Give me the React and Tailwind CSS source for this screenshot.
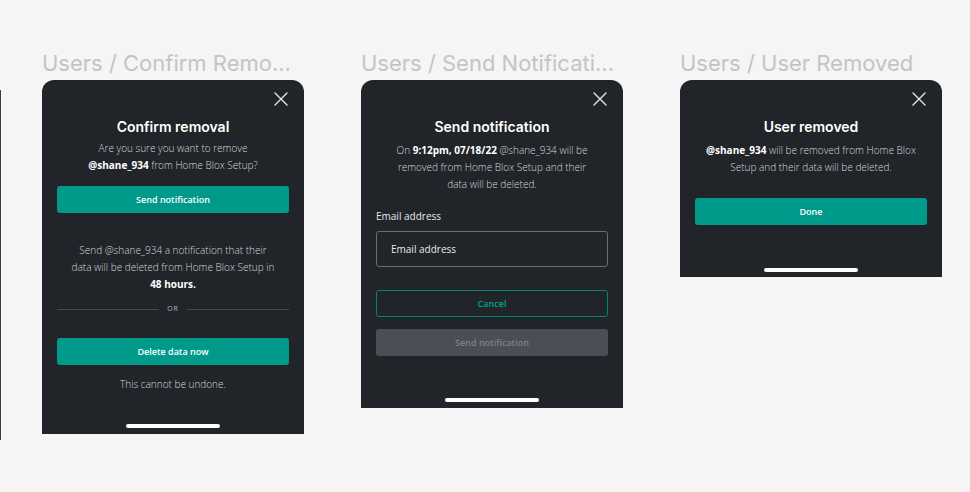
import React from "react";

const teal = "bg-[#009a8b]";

function CloseIcon() {
  return (
    <svg width="14" height="14" viewBox="0 0 14 14" fill="none">
      <path d="M1 1L13 13M13 1L1 13" stroke="#e5e7eb" strokeWidth="1.4" strokeLinecap="round" />
    </svg>
  );
}

function HomeBar() {
  return <div className="mx-auto h-[4px] w-[94px] rounded-full bg-white" />;
}

// frame titles are cut short in the design file itself
function Frame({ label, children }) {
  return (
    <div className="flex w-[262px] flex-col pt-[50px]">
      <div className="mb-[4px] h-[26px] whitespace-nowrap text-[22px] leading-[26px] text-[#c4c4c4]">{label}</div>
      <div className="flex flex-col rounded-t-[12px] bg-[#212429] px-[15px]">
        <div className="flex h-[14px] justify-end pr-[1px] mt-[12px]">
          <CloseIcon />
        </div>
        {children}
      </div>
    </div>
  );
}

function Title({ children }) {
  return (
    <div className="mt-[11px] text-center text-[14px] font-semibold leading-[20px] text-white" style={{ fontFamily: "Inter, sans-serif" }}>
      {children}
    </div>
  );
}

function Body({ className = "", children }) {
  return (
    <p className={"whitespace-nowrap text-center text-[10px] font-light leading-[17px] text-[#d4d6d9] " + className}>{children}</p>
  );
}

function Button({ className = "", children }) {
  return (
    <div className={"flex h-[27px] items-center justify-center rounded-[3px] text-[9px] font-semibold " + className}>{children}</div>
  );
}

export default function App() {
  return (
    <div className="flex h-[492px] w-[970px] items-start overflow-hidden bg-[#f5f5f5]" style={{ fontFamily: "'Open Sans', sans-serif" }}>
      <div className="mt-[90px] h-[350px] w-px bg-[#3a3d43]" />
      <div className="ml-[41px] flex items-start gap-[57px]" style={{ fontFamily: "Inter, sans-serif" }}>
        <Frame label="Users / Confirm Remo...">
          <div style={{ fontFamily: "'Open Sans', sans-serif" }} className="flex flex-col">
            <Title>Confirm removal</Title>
            <Body className="mt-[3px]">
              Are you sure you want to remove
              <br />
              <span className="font-bold text-white">@shane_934</span> from Home Blox Setup?
            </Body>
            <Button className={"mt-[12px] text-white " + teal}>Send notification</Button>
            <Body className="mt-[29px]">
              Send @shane_934 a notification that their
              <br />
              data will be deleted from Home Blox Setup in
              <br />
              <span className="font-bold text-white">48 hours.</span>
            </Body>
            <div className="mt-[11px] flex h-[10px] items-center gap-[8px]">
              <div className="h-px flex-1 bg-[#464a51]" />
              <span className="text-[7px] leading-[10px] tracking-[1px] text-[#b9bcc1]">OR</span>
              <div className="h-px flex-1 bg-[#464a51]" />
            </div>
            <Button className={"mt-[24px] text-white " + teal}>Delete data now</Button>
            <Body className="mt-[11px]">This cannot be undone.</Body>
            <div className="mt-[31px] pb-[6px]">
              <HomeBar />
            </div>
          </div>
        </Frame>

        <Frame label="Users / Send Notificati...">
          <div style={{ fontFamily: "'Open Sans', sans-serif" }} className="flex flex-col">
            <Title>Send notification</Title>
            <Body className="mt-[5px]">
              On <span className="font-bold text-white">9:12pm, 07/18/22</span> @shane_934 will be
              <br />
              removed from Home Blox Setup and their
              <br />
              data will be deleted.
            </Body>
            <div className="mt-[15px] text-[10px] leading-[17px] text-[#e8e9eb]">Email address</div>
            <div className="mt-[6px] flex h-[36px] items-center rounded-[3px] border border-[#6a6e75] px-[14px] text-[10px] text-[#e8e9eb]">
              Email address
            </div>
            <Button className="mt-[23px] border border-[#00857a] text-[#00a595]">Cancel</Button>
            <Button className="mt-[12px] bg-[#4a4f56] text-[#7d8289]">Send notification</Button>
            <div className="mt-[42px] pb-[6px]">
              <HomeBar />
            </div>
          </div>
        </Frame>

        <Frame label="Users / User Removed">
          <div style={{ fontFamily: "'Open Sans', sans-serif" }} className="flex flex-col">
            <Title>User removed</Title>
            <Body className="mt-[5px]">
              <span className="font-bold text-white">@shane_934</span> will be removed from Home Blox
              <br />
              Setup and their data will be deleted.
            </Body>
            <Button className={"mt-[22px] text-white " + teal}>Done</Button>
            <div className="mt-[43px] pb-[5px]">
              <HomeBar />
            </div>
          </div>
        </Frame>
      </div>
    </div>
  );
}
